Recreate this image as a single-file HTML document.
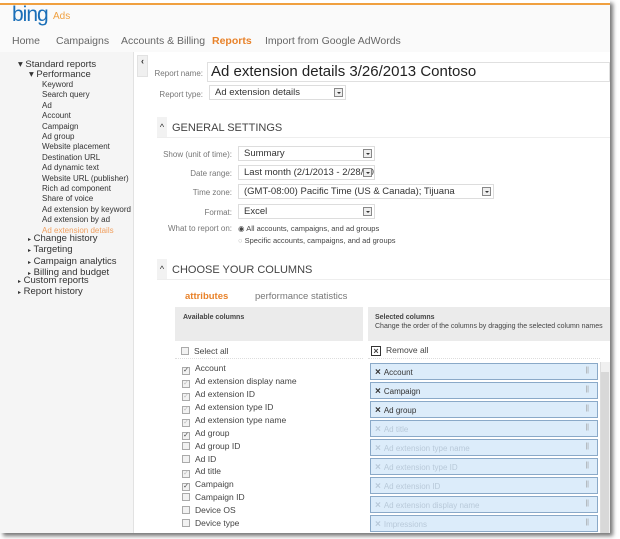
<!DOCTYPE html>
<html><head><meta charset="utf-8"><style>
*{margin:0;padding:0;box-sizing:border-box}
body{width:620px;height:539px;background:#fff;font-family:"Liberation Sans",Arial,sans-serif;position:relative;overflow:hidden;color:#333}
.a{position:absolute;white-space:nowrap}
#frame{position:absolute;left:0;top:0;width:610px;height:533px;background:#fff;box-shadow:3px 3px 4px #777;overflow:hidden}
.nav{font-size:10.5px;color:#666;top:35px}
.side{position:absolute;left:0;top:52px;width:134px;height:490px;background:#f5f5f5;border-right:1px solid #e2e2e2}
.t{font-size:8px;color:#333}
.t2{font-size:9.5px;color:#333}
.lbl{font-size:8px;color:#777;text-align:right}
.sel{position:absolute;height:15px;border:1px solid #ddd;background:#fff;font-size:9.5px;padding:1px 5px;color:#333;white-space:nowrap;overflow:hidden}
.sel i{position:absolute;right:2px;top:2px;width:9px;height:9px;border:1px solid #888;background:#eee}
.sel i:after{content:"";position:absolute;left:2px;top:3px;border-left:2px solid transparent;border-right:2px solid transparent;border-top:2px solid #333}
.hdr{font-size:11px;color:#444}
.cb{display:inline-block;width:8px;height:8px;border:1px solid #aaa;background:#f2f2f2;vertical-align:-1px;margin-right:5px;font-size:7px;line-height:6px;text-align:center}
.av{font-size:8.5px;color:#444;left:182px}
.box{position:absolute;left:370px;width:228px;height:17px;border:1px solid #8aa9c8;background:#dcecfa;font-size:8px;padding:3px 4px;color:#333}
.box b{font-weight:bold;margin-right:3px;font-size:10px}
.box.f{color:#b8c9d9}
.box s{position:absolute;right:8px;top:3px;text-decoration:none;color:#999;font-size:7px}
</style></head><body>
<div id="frame">
<div class="a" style="left:0;top:3px;width:610px;height:2px;background:#f0a040"></div>
<div class="a" style="left:0;top:5px;width:610px;height:47px;background:#fafafa"></div>
<div class="a" style="left:12px;top:3px;font-size:21px;color:#1b6fb8;letter-spacing:-1px">bing</div>
<div class="a" style="left:53px;top:11px;font-size:10px;color:#f0a040">Ads</div>
<div class="a nav" style="left:12px">Home</div>
<div class="a nav" style="left:56px">Campaigns</div>
<div class="a nav" style="left:121px">Accounts &amp; Billing</div>
<div class="a nav" style="left:212px;color:#e8822a;font-weight:bold">Reports</div>
<div class="a nav" style="left:265px">Import from Google AdWords</div>
<div class="side"></div>
<div class="a t2" style="left:18px;top:59px">▾ Standard reports</div>
<div class="a t2" style="left:29px;top:69px">▾ Performance</div>
<div class="a t" style="left:42px;top:80px;line-height:10.4px">Keyword<br>Search query<br>Ad<br>Account<br>Campaign<br>Ad group<br>Website placement<br>Destination URL<br>Ad dynamic text<br>Website URL (publisher)<br>Rich ad component<br>Share of voice<br>Ad extension by keyword<br>Ad extension by ad<br><span style="color:#f0a060">Ad extension details</span></div>
<div class="a t2" style="left:28px;top:234px;line-height:10.4px"><span style="font-size:6px">▸</span> Change history<br><span style="font-size:6px">▸</span> Targeting<br><span style="font-size:6px">▸</span> Campaign analytics<br><span style="font-size:6px">▸</span> Billing and budget</div>
<div class="a t2" style="left:18px;top:276px;line-height:10.4px"><span style="font-size:6px">▸</span> Custom reports<br><span style="font-size:6px">▸</span> Report history</div>
<div class="a" style="left:137px;top:55px;width:11px;height:22px;background:#f0f0f0;border:1px solid #e2e2e2;font-size:9px;text-align:center;font-weight:bold">‹</div>

<div class="a lbl" style="left:150px;top:69px;width:53px">Report name:</div>
<div class="a" style="left:207px;top:62px;width:403px;height:20px;border:1px solid #e0e0e0;font-size:15px;padding:0 3px;color:#222">Ad extension details 3/26/2013 Contoso</div>
<div class="a lbl" style="left:150px;top:90px;width:53px">Report type:</div>
<div class="sel" style="left:209px;top:85px;width:137px">Ad extension details<i></i></div>

<div class="a" style="left:157px;top:117px;width:10px;height:20px;background:#f2f2f2;font-size:9px;text-align:center;line-height:20px">^</div>
<div class="a" style="left:157px;top:137px;width:453px;height:1px;background:#eee"></div>
<div class="a hdr" style="left:172px;top:122px">GENERAL SETTINGS</div>
<div class="a lbl" style="left:150px;top:150px;width:82px">Show (unit of time):</div>
<div class="sel" style="left:238px;top:146px;width:137px">Summary<i></i></div>
<div class="a lbl" style="left:150px;top:169px;width:82px">Date range:</div>
<div class="sel" style="left:238px;top:165px;width:137px">Last month (2/1/2013 - 2/28/2013)<i></i></div>
<div class="a lbl" style="left:150px;top:188px;width:82px">Time zone:</div>
<div class="sel" style="left:238px;top:184px;width:256px">(GMT-08:00) Pacific Time (US &amp; Canada); Tijuana<i></i></div>
<div class="a lbl" style="left:150px;top:208px;width:82px">Format:</div>
<div class="sel" style="left:238px;top:204px;width:137px">Excel<i></i></div>
<div class="a lbl" style="left:150px;top:224px;width:82px">What to report on:</div>
<div class="a" style="left:238px;top:223px;font-size:7.5px;color:#444;line-height:12px">◉ All accounts, campaigns, and ad groups<br><span style="color:#bbb">○</span> Specific accounts, campaigns, and ad groups</div>

<div class="a" style="left:157px;top:259px;width:10px;height:20px;background:#f2f2f2;font-size:9px;text-align:center;line-height:20px">^</div>
<div class="a" style="left:157px;top:279px;width:453px;height:1px;background:#eee"></div>
<div class="a hdr" style="left:172px;top:264px">CHOOSE YOUR COLUMNS</div>
<div class="a" style="left:185px;top:291px;font-size:9.5px;color:#e8822a;font-weight:bold">attributes</div>
<div class="a" style="left:255px;top:291px;font-size:9.5px;color:#777">performance statistics</div>

<div class="a" style="left:175px;top:307px;width:188px;height:34px;background:#ebebeb;font-size:7px;font-weight:bold;color:#444;padding:7px 8px">Available columns</div>
<div class="a" style="left:368px;top:307px;width:242px;height:34px;background:#ebebeb;font-size:7px;color:#444;padding:6px 7px;line-height:9px"><b>Selected columns</b><br>Change the order of the columns by dragging the selected column names</div>
<div class="a" style="left:181px;top:346px;font-size:8.5px;color:#444"><span class="cb"></span>Select all</div>
<div class="a" style="left:175px;top:358px;width:188px;border-top:1px dotted #ddd"></div>
<div class="a" style="left:371px;top:345px;font-size:8.5px;color:#444"><span class="cb" style="width:10px;height:10px;border-color:#333;background:#fff;font-size:9px;line-height:8px;font-weight:bold">×</span>Remove all</div>
<div class="a" style="left:368px;top:358px;width:232px;border-top:1px dotted #ddd"></div>
<div class="a av" style="top:362px;line-height:12.7px">
<span class="cb">✓</span>Account<br><span class="cb" style="color:#bbb">✓</span>Ad extension display name<br><span class="cb" style="color:#bbb">✓</span>Ad extension ID<br><span class="cb" style="color:#bbb">✓</span>Ad extension type ID<br><span class="cb" style="color:#bbb">✓</span>Ad extension type name<br><span class="cb">✓</span>Ad group<br><span class="cb"></span>Ad group ID<br><span class="cb"></span>Ad ID<br><span class="cb" style="color:#bbb">✓</span>Ad title<br><span class="cb">✓</span>Campaign<br><span class="cb"></span>Campaign ID<br><span class="cb"></span>Device OS<br><span class="cb"></span>Device type</div>

<div class="box" style="top:363px"><b>×</b>Account<s>||</s></div>
<div class="box" style="top:382px"><b>×</b>Campaign<s>||</s></div>
<div class="box" style="top:401px"><b>×</b>Ad group<s>||</s></div>
<div class="box f" style="top:420px"><b>×</b>Ad title<s>||</s></div>
<div class="box f" style="top:439px"><b>×</b>Ad extension type name<s>||</s></div>
<div class="box f" style="top:458px"><b>×</b>Ad extension type ID<s>||</s></div>
<div class="box f" style="top:477px"><b>×</b>Ad extension ID<s>||</s></div>
<div class="box f" style="top:496px"><b>×</b>Ad extension display name<s>||</s></div>
<div class="box f" style="top:515px"><b>×</b>Impressions<s>||</s></div>
<div class="a" style="left:600px;top:362px;width:10px;height:171px;background:#f0f0f0;border-left:1px solid #ddd"></div>
<div class="a" style="left:601px;top:372px;width:8px;height:161px;background:#d8d8d8"></div>
</div>
</body></html>
